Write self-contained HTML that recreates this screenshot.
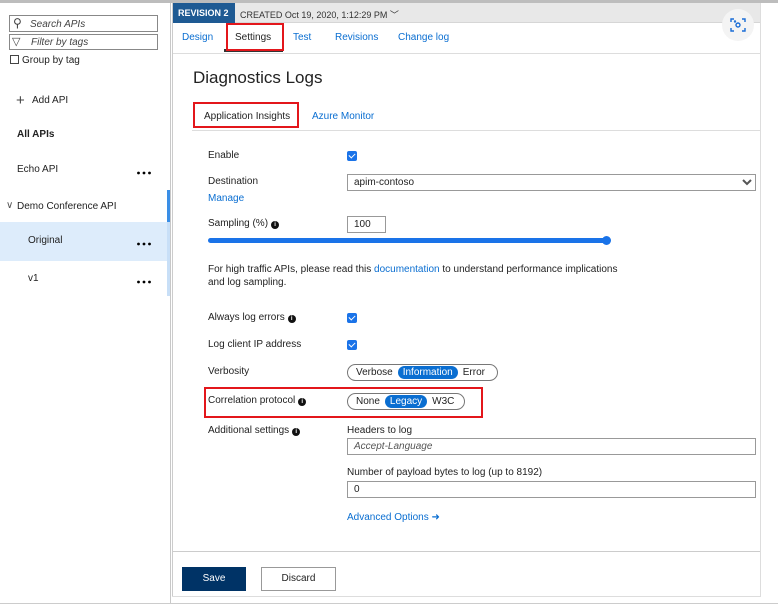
<!DOCTYPE html>
<html><head><meta charset="utf-8"><style>
*{box-sizing:border-box;margin:0;padding:0}
body{width:778px;height:607px;background:#fff;font-family:"Liberation Sans","DejaVu Sans",sans-serif;font-size:10px;color:#222;position:relative;overflow:hidden}
.a{position:absolute;white-space:nowrap}
.l{color:#0a6ed1}
.chk{position:absolute;width:10px;height:10px;background:#1a73e8;border-radius:2px}
.chk:after{content:"";position:absolute;left:3px;top:1px;width:3px;height:5px;border:solid #fff;border-width:0 1.5px 1.5px 0;transform:rotate(45deg)}
.info{display:inline-block;width:8px;height:8px;border-radius:50%;background:#111;color:#fff;font-size:6px;line-height:8px;text-align:center;font-weight:bold;vertical-align:0px;margin-left:3px}
.inp{position:absolute;border:1px solid #999;height:17px;padding:0 6px;font-size:10px;line-height:15px}
.pill{position:absolute;height:17px;border:1px solid #777;border-radius:9px;display:flex;align-items:center;padding:0 3px;line-height:13px}
.pill span{padding:0 5px;border-radius:7px;height:13px}
.pill .on{background:#0a6ed1;color:#fff}
.dots{position:absolute;left:137px}
.red{position:absolute;border:2px solid #e3161b}
</style></head><body>
<div class="a" style="left:0;top:0;width:778px;height:3px;background:#bdbdbd"></div>
<div class="a" style="left:0;top:603px;width:778px;height:1px;background:#ccc"></div>
<div class="a" style="left:9px;top:15px;width:149px;height:17px;border:1px solid #888"></div>
<div class="a" style="left:13px;top:16px;font-size:12px;color:#444">&#9906;</div>
<div class="a" style="left:30px;top:19px;font-style:italic;color:#444">Search APIs</div>
<div class="a" style="left:9px;top:34px;width:149px;height:16px;border:1px solid #888"></div>
<div class="a" style="left:12px;top:35px;font-size:11px;color:#444">&#9661;</div>
<div class="a" style="left:31px;top:37px;font-style:italic;color:#444">Filter by tags</div>
<div class="a" style="left:10px;top:55px;width:9px;height:9px;border:1px solid #444"></div>
<div class="a" style="left:22px;top:55px">Group by tag</div>
<div class="a" style="left:16px;top:92px;font-size:15px;font-weight:100;color:#444">+</div>
<div class="a" style="left:32px;top:95px">Add API</div>
<div class="a" style="left:17px;top:129px;font-weight:bold">All APIs</div>
<div class="a" style="left:17px;top:164px">Echo API</div>
<svg class="dots" style="top:171px" width="14" height="4"><circle cx="1.5" cy="2" r="1.4"/><circle cx="7" cy="2" r="1.4"/><circle cx="12.5" cy="2" r="1.4"/></svg>
<div class="a" style="left:6px;top:200px;color:#555">&#8744;</div>
<div class="a" style="left:17px;top:201px">Demo Conference API</div>
<div class="a" style="left:0;top:222px;width:168px;height:39px;background:#ddecfb"></div>
<div class="a" style="left:28px;top:235px">Original</div>
<svg class="dots" style="top:242px" width="14" height="4"><circle cx="1.5" cy="2" r="1.4"/><circle cx="7" cy="2" r="1.4"/><circle cx="12.5" cy="2" r="1.4"/></svg>
<div class="a" style="left:28px;top:273px">v1</div>
<svg class="dots" style="top:280px" width="14" height="4"><circle cx="1.5" cy="2" r="1.4"/><circle cx="7" cy="2" r="1.4"/><circle cx="12.5" cy="2" r="1.4"/></svg>
<div class="a" style="left:167px;top:190px;width:3px;height:106px;background:#c8dff7"></div>
<div class="a" style="left:167px;top:190px;width:3px;height:32px;background:#3a8ee6"></div>
<div class="a" style="left:170px;top:3px;width:1px;height:600px;background:#c8c8c8"></div>
<div class="a" style="left:172px;top:3px;width:1px;height:593px;background:#ccc"></div>
<div class="a" style="left:760px;top:3px;width:1px;height:593px;background:#ddd"></div>
<div class="a" style="left:172px;top:596px;width:589px;height:1px;background:#ddd"></div>
<div class="a" style="left:173px;top:3px;width:587px;height:20px;background:#e8e8e8;border-bottom:1px solid #d6d6d6"></div>
<div class="a" style="left:173px;top:3px;width:62px;height:20px;background:#1e5a93;color:#fff;font-weight:bold;font-size:9px;line-height:20px;padding-left:5px">REVISION 2</div>
<div class="a" style="left:240px;top:8px;font-size:9px;color:#333">CREATED Oct 19, 2020, 1:12:29 PM &#65088;</div>
<div class="a" style="left:722px;top:9px;width:32px;height:32px;border-radius:50%;background:#f4f4f4"></div>
<svg class="a" style="left:729px;top:16px" width="18" height="18" viewBox="0 0 18 18" fill="none" stroke="#1a6dd6" stroke-width="1.4"><path d="M2 6V3h3M13 3h3v3M16 12v3h-3M5 15H2v-3"/><circle cx="9" cy="9" r="2"/><circle cx="6" cy="5.5" r=".5"/></svg>
<div class="a" style="left:173px;top:53px;width:587px;height:1px;background:#ddd"></div>
<div class="a l" style="left:182px;top:32px">Design</div>
<div class="a" style="left:235px;top:32px">Settings</div>
<div class="a" style="left:224px;top:49px;width:59px;height:3px;background:#333"></div>
<div class="red" style="left:226px;top:23px;width:58px;height:28px"></div>
<div class="a l" style="left:293px;top:32px">Test</div>
<div class="a l" style="left:335px;top:32px">Revisions</div>
<div class="a l" style="left:398px;top:32px">Change log</div>
<div class="a" style="left:193px;top:68px;font-size:17px;color:#222">Diagnostics Logs</div>
<div class="a" style="left:192px;top:130px;width:568px;height:1px;background:#ddd"></div>
<div class="a" style="left:204px;top:111px">Application Insights</div>
<div class="red" style="left:193px;top:102px;width:106px;height:26px"></div>
<div class="a l" style="left:312px;top:111px">Azure Monitor</div>
<div class="a" style="left:208px;top:150px">Enable</div>
<div class="chk" style="left:347px;top:151px"></div>
<div class="a" style="left:208px;top:176px">Destination</div>
<div class="a l" style="left:208px;top:193px">Manage</div>
<div class="inp" style="left:347px;top:174px;width:409px">apim-contoso</div>
<svg class="a" style="left:742px;top:178px" width="10" height="8" viewBox="0 0 10 8"><path d="M1 2l4 4 4-4" stroke="#555" stroke-width="2" fill="none"/></svg>
<div class="a" style="left:208px;top:218px">Sampling (%)<span class="info">i</span></div>
<div class="inp" style="left:347px;top:216px;width:39px">100</div>
<div class="a" style="left:208px;top:238px;width:400px;height:5px;background:#1a73e8;border-radius:3px"></div>
<div class="a" style="left:602px;top:236px;width:9px;height:9px;border-radius:50%;background:#1a73e8"></div>
<div class="a" style="left:208px;top:263px;line-height:13px">For high traffic APIs, please read this <span class="l">documentation</span> to understand performance implications<br>and log sampling.</div>
<div class="a" style="left:208px;top:312px">Always log errors<span class="info">i</span></div>
<div class="chk" style="left:347px;top:313px"></div>
<div class="a" style="left:208px;top:339px">Log client IP address</div>
<div class="chk" style="left:347px;top:340px"></div>
<div class="a" style="left:208px;top:366px">Verbosity</div>
<div class="pill" style="left:347px;top:364px;width:151px"><span>Verbose</span><span class="on">Information</span><span>Error</span></div>
<div class="red" style="left:204px;top:387px;width:279px;height:31px"></div>
<div class="a" style="left:208px;top:395px">Correlation protocol<span class="info">i</span></div>
<div class="pill" style="left:347px;top:393px;width:118px"><span>None</span><span class="on">Legacy</span><span>W3C</span></div>
<div class="a" style="left:208px;top:425px">Additional settings<span class="info">i</span></div>
<div class="a" style="left:347px;top:425px">Headers to log</div>
<div class="inp" style="left:347px;top:438px;width:409px;font-style:italic;color:#555">Accept-Language</div>
<div class="a" style="left:347px;top:467px">Number of payload bytes to log (up to 8192)</div>
<div class="inp" style="left:347px;top:481px;width:409px">0</div>
<div class="a l" style="left:347px;top:512px">Advanced Options &#10140;</div>
<div class="a" style="left:173px;top:551px;width:587px;height:1px;background:#ccc"></div>
<div class="a" style="left:182px;top:567px;width:64px;height:24px;background:#003366;color:#fff;text-align:center;line-height:24px">Save</div>
<div class="a" style="left:261px;top:567px;width:75px;height:24px;border:1px solid #999;text-align:center;line-height:22px">Discard</div>
</body></html>
